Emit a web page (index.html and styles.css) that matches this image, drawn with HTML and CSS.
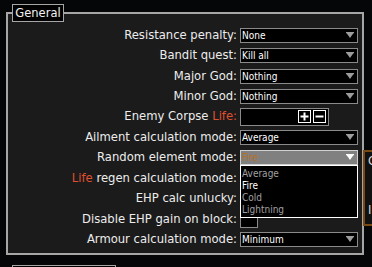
FILE: index.html
```html
<!DOCTYPE html>
<html>
<head>
<meta charset="utf-8">
<link rel="stylesheet" href="styles.css">
</head>
<body>
<div class="page">
  <section class="panel">
    <div class="legend">General</div>
    <div class="form">
      <div class="label">Resistance penalty:</div>
      <div class="dd"><span>None</span><svg class="arrow" viewBox="0 0 8 6"><rect x="0" y="0" width="8" height="1.2"/><polygon points="0.5,1 7.5,1 4,6"/></svg></div>

      <div class="label">Bandit quest:</div>
      <div class="dd"><span>Kill all</span><svg class="arrow" viewBox="0 0 8 6"><rect x="0" y="0" width="8" height="1.2"/><polygon points="0.5,1 7.5,1 4,6"/></svg></div>

      <div class="label">Major God:</div>
      <div class="dd"><span>Nothing</span><svg class="arrow" viewBox="0 0 8 6"><rect x="0" y="0" width="8" height="1.2"/><polygon points="0.5,1 7.5,1 4,6"/></svg></div>

      <div class="label">Minor God:</div>
      <div class="dd"><span>Nothing</span><svg class="arrow" viewBox="0 0 8 6"><rect x="0" y="0" width="8" height="1.2"/><polygon points="0.5,1 7.5,1 4,6"/></svg></div>

      <div class="label">Enemy Corpse <span class="life">Life:</span></div>
      <div class="ctrl">
        <div class="edit">
          <button class="btn" type="button"><svg viewBox="0 0 9 9"><rect x="3.5" y="0.5" width="2" height="8"/><rect x="0.5" y="3.5" width="8" height="2"/></svg></button>
          <button class="btn" type="button"><svg viewBox="0 0 9 9"><rect x="0.5" y="3.5" width="8" height="2"/></svg></button>
        </div>
      </div>

      <div class="label">Ailment calculation mode:</div>
      <div class="dd"><span>Average</span><svg class="arrow" viewBox="0 0 8 6"><rect x="0" y="0" width="8" height="1.2"/><polygon points="0.5,1 7.5,1 4,6"/></svg></div>

      <div class="label">Random element mode:</div>
      <div class="dd active"><span class="fire">Fire</span><svg class="arrow" viewBox="0 0 8 6"><rect x="0" y="0" width="8" height="1.2"/><polygon points="0.5,1 7.5,1 4,6"/></svg>
        <ul class="list">
          <li>Average</li>
          <li class="sel">Fire</li>
          <li>Cold</li>
          <li>Lightning</li>
        </ul>
      </div>

      <div class="label"><span class="life">Life</span> regen calculation mode:</div>
      <div class="dd"></div>

      <div class="label">EHP calc unlucky:</div>
      <div class="ctrl"><div class="check"></div></div>

      <div class="label">Disable EHP gain on block:</div>
      <div class="ctrl"><div class="check"></div></div>

      <div class="label">Armour calculation mode:</div>
      <div class="dd"><span>Minimum</span><svg class="arrow" viewBox="0 0 8 6"><rect x="0" y="0" width="8" height="1.2"/><polygon points="0.5,1 7.5,1 4,6"/></svg></div>
    </div>
  </section>
  <div class="next"></div>
  <div class="tooltip"><div class="tip-line">C</div><div class="tip-line low">I</div></div>
</div>
</body>
</html>
```
FILE: styles.css
```css
html, body {
  margin: 0;
  padding: 0;
  background: #050608;
  overflow: hidden;
  width: 372px;
  height: 267px;
}
.page {
  position: relative;
  width: 372px;
  height: 267px;
  overflow: hidden;
  font-family: "DejaVu Sans", "Bitstream Vera Sans", sans-serif;
}
.panel {
  position: relative;
  box-sizing: border-box;
  margin: 12px 0 0 6px;
  width: 358px;
  height: 243px;
  border: 2px solid #a6a6a6;
  background: #1b1b1b;
}
.legend {
  position: absolute;
  left: 4px;
  top: -10px;
  box-sizing: border-box;
  width: 52px;
  height: 18px;
  border: 1px solid #a6a6a6;
  background: #000;
  color: #f2f2f2;
  font-size: 11.5px;
  line-height: 16px;
  text-align: center;
}
.form {
  display: grid;
  grid-template-columns: 229px 118px;
  column-gap: 3px;
  grid-auto-rows: 20.45px;
  align-items: center;
  padding-top: 11px;
}
.label {
  text-align: right;
  white-space: nowrap;
  color: #ededed;
  font-size: 11.6px;
  line-height: 13px;
}
.life { color: #e05030; }
.fire { color: #b97123; }
.ctrl { display: flex; align-items: center; }
.dd {
  position: relative;
  box-sizing: border-box;
  height: 15px;
  border: 1px solid #8a8a8a;
  background: #000;
  display: flex;
  align-items: center;
  justify-content: space-between;
  padding: 0 3px 0 1px;
  color: #fff;
  font-family: "DejaVu Sans Condensed", "DejaVu Sans", sans-serif;
  font-stretch: condensed;
  font-size: 10px;
  line-height: 13px;
}
.arrow {
  width: 8px;
  height: 6px;
  margin-top: -1px;
  fill: #9c9c9c;
}
.dd.active {
  background: #808080;
  border-color: #d0d0d0;
}
.dd.active .arrow { fill: #fff; }
.list {
  position: absolute;
  z-index: 5;
  left: -1px;
  top: 14px;
  box-sizing: border-box;
  width: 118px;
  margin: 0;
  padding: 2px 0 1px 1px;
  list-style: none;
  border: 1px solid #fff;
  background: #000;
}
.list li {
  height: 12px;
  line-height: 12px;
  color: #a0a0a0;
}
.list li.sel { color: #fff; }
.edit {
  box-sizing: border-box;
  width: 89px;
  height: 18px;
  border: 1px solid #8a8a8a;
  background: #000;
  display: flex;
  justify-content: flex-end;
  align-items: center;
  gap: 2px;
  padding-right: 2px;
}
.btn {
  box-sizing: border-box;
  width: 13px;
  height: 13px;
  padding: 1px;
  margin: 0;
  border: 1px solid #fff;
  background: #000;
  display: flex;
  align-items: center;
  justify-content: center;
}
.btn svg {
  width: 9px;
  height: 9px;
  fill: #fff;
  display: block;
}
.check {
  box-sizing: border-box;
  width: 18px;
  height: 18px;
  border: 1px solid #8a8a8a;
  background: #000;
}
.next {
  box-sizing: border-box;
  margin: 10px 0 0 12px;
  width: 104px;
  height: 20px;
  border: 1px solid #a6a6a6;
  background: #000;
}
.tooltip {
  position: absolute;
  left: 363px;
  top: 150px;
  box-sizing: border-box;
  width: 60px;
  height: 76px;
  border: 2px solid #7a4a14;
  background: #111;
  color: #d8d8d8;
  font-size: 11.5px;
  line-height: 13px;
  padding: 3px 0 0 3px;
}
.tip-line.low { margin-top: 36px; }
```
